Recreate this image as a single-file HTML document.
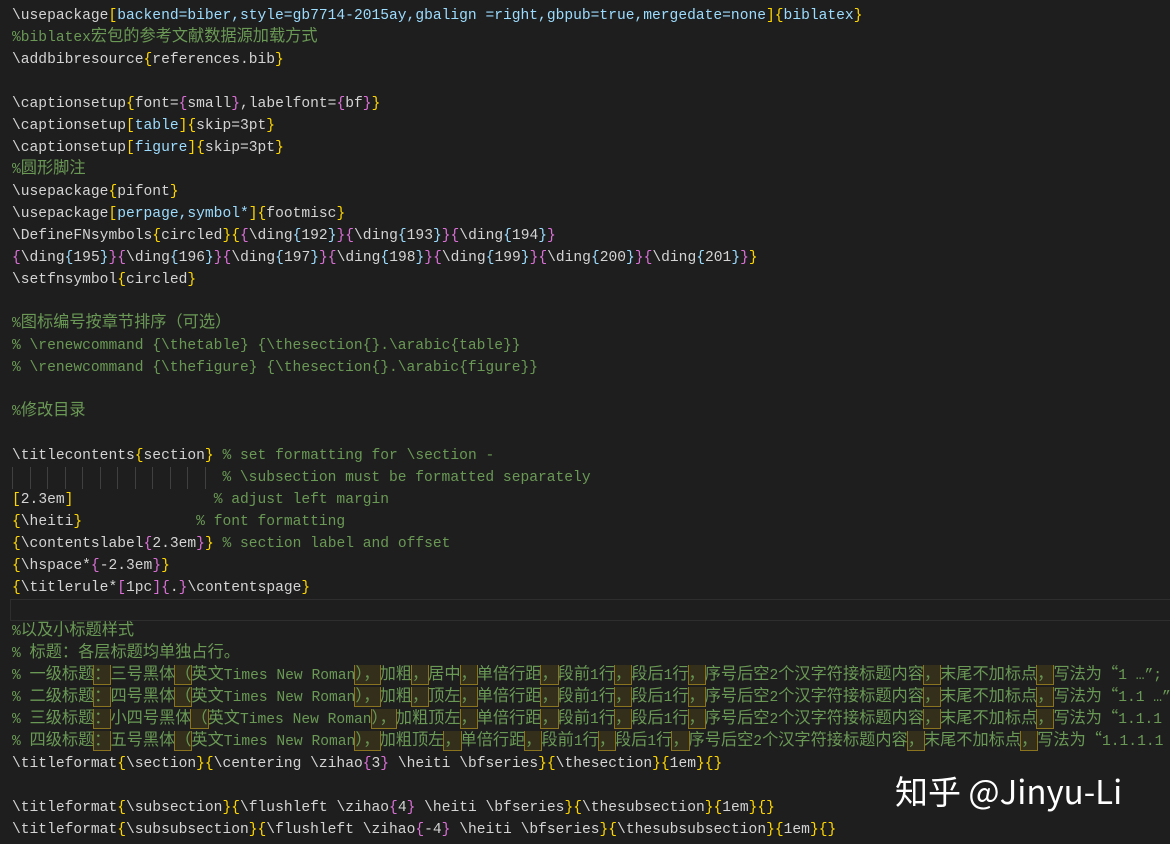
<!DOCTYPE html>
<html><head><meta charset="utf-8"><style>
html,body{margin:0;padding:0;background:#1e1e1e;width:1170px;height:844px;overflow:hidden}
#ed{position:absolute;left:12px;top:5px;font-family:"Liberation Mono",monospace;font-size:14.62px;color:#d4d4d4}
.l{height:22px;line-height:22px;white-space:pre;overflow:hidden}
.g{color:#ffd700}.m{color:#da70d6}.b{color:#9cdcfe}.c{color:#6a9955}
.k{font-family:"Noto Sans CJK SC",sans-serif;font-size:16.2px;line-height:0;vertical-align:baseline}
.x{outline:1px solid #8a7420;background:rgba(120,100,20,.25)}
.cur{position:absolute;left:10px;top:599px;width:1160px;height:20px;border:1px solid #2e2e2e}
.ig{display:inline-block;width:17.54px;height:22px;vertical-align:top;background:linear-gradient(to right,#404040 1px,transparent 1px)}
#wm{position:absolute;left:895px;top:768px;color:#fff;font-family:"Noto Sans CJK SC","Liberation Sans",sans-serif;font-size:33px;line-height:44px}
</style></head><body>
<div class="cur"></div>
<div id="ed"><div class="l">\usepackage<span class="g">[</span><span class="b">backend=biber,style=gb7714-2015ay,gbalign =right,gbpub=true,mergedate=none</span><span class="g">]{</span><span class="b">biblatex</span><span class="g">}</span></div><div class="l c">%biblatex<span class="k">宏包的参考文献数据源加载方式</span></div><div class="l">\addbibresource<span class="g">{</span>references.bib<span class="g">}</span></div><div class="l"> </div><div class="l">\captionsetup<span class="g">{</span>font=<span class="m">{</span>small<span class="m">}</span>,labelfont=<span class="m">{</span>bf<span class="m">}</span><span class="g">}</span></div><div class="l">\captionsetup<span class="g">[</span><span class="b">table</span><span class="g">]{</span>skip=3pt<span class="g">}</span></div><div class="l">\captionsetup<span class="g">[</span><span class="b">figure</span><span class="g">]{</span>skip=3pt<span class="g">}</span></div><div class="l c">%<span class="k">圆形脚注</span></div><div class="l">\usepackage<span class="g">{</span>pifont<span class="g">}</span></div><div class="l">\usepackage<span class="g">[</span><span class="b">perpage,symbol*</span><span class="g">]{</span>footmisc<span class="g">}</span></div><div class="l">\DefineFNsymbols<span class="g">{</span>circled<span class="g">}{</span><span class="m">{</span>\ding<span class="b">{</span>192<span class="b">}</span><span class="m">}{</span>\ding<span class="b">{</span>193<span class="b">}</span><span class="m">}{</span>\ding<span class="b">{</span>194<span class="b">}</span><span class="m">}</span></div><div class="l"><span class="m">{</span>\ding<span class="b">{</span>195<span class="b">}</span><span class="m">}{</span>\ding<span class="b">{</span>196<span class="b">}</span><span class="m">}{</span>\ding<span class="b">{</span>197<span class="b">}</span><span class="m">}{</span>\ding<span class="b">{</span>198<span class="b">}</span><span class="m">}{</span>\ding<span class="b">{</span>199<span class="b">}</span><span class="m">}{</span>\ding<span class="b">{</span>200<span class="b">}</span><span class="m">}{</span>\ding<span class="b">{</span>201<span class="b">}</span><span class="m">}</span><span class="g">}</span></div><div class="l">\setfnsymbol<span class="g">{</span>circled<span class="g">}</span></div><div class="l"> </div><div class="l c">%<span class="k">图标编号按章节排序（可选）</span></div><div class="l c">% \renewcommand {\thetable} {\thesection{}.\arabic{table}}</div><div class="l c">% \renewcommand {\thefigure} {\thesection{}.\arabic{figure}}</div><div class="l"> </div><div class="l c">%<span class="k">修改目录</span></div><div class="l"> </div><div class="l">\titlecontents<span class="g">{</span>section<span class="g">}</span> <span class="c">% set formatting for \section -</span></div><div class="l"><span class="ig"></span><span class="ig"></span><span class="ig"></span><span class="ig"></span><span class="ig"></span><span class="ig"></span><span class="ig"></span><span class="ig"></span><span class="ig"></span><span class="ig"></span><span class="ig"></span><span class="ig"></span><span class="c">% \subsection must be formatted separately</span></div><div class="l"><span class="g">[</span>2.3em<span class="g">]</span>                <span class="c">% adjust left margin</span></div><div class="l"><span class="g">{</span>\heiti<span class="g">}</span>             <span class="c">% font formatting</span></div><div class="l"><span class="g">{</span>\contentslabel<span class="m">{</span>2.3em<span class="m">}</span><span class="g">}</span> <span class="c">% section label and offset</span></div><div class="l"><span class="g">{</span>\hspace*<span class="m">{</span>-2.3em<span class="m">}</span><span class="g">}</span></div><div class="l"><span class="g">{</span>\titlerule*<span class="m">[</span>1pc<span class="m">]{</span>.<span class="m">}</span>\contentspage<span class="g">}</span></div><div class="l"> </div><div class="l c">%<span class="k">以及小标题样式</span></div><div class="l c">% <span class="k">标题：各层标题均单独占行。</span></div><div class="l c">% <span class="k">一级标题<span class="x">：</span>三号黑体<span class="x">（</span>英文</span>Times New Roman<span class="k"><span class="x">），</span>加粗<span class="x">，</span>居中<span class="x">，</span>单倍行距<span class="x">，</span>段前</span>1<span class="k">行<span class="x">，</span>段后</span>1<span class="k">行<span class="x">，</span>序号后空</span>2<span class="k">个汉字符接标题内容<span class="x">，</span>末尾不加标点<span class="x">，</span>写法为“</span>1 …”;</div><div class="l c">% <span class="k">二级标题<span class="x">：</span>四号黑体<span class="x">（</span>英文</span>Times New Roman<span class="k"><span class="x">），</span>加粗<span class="x">，</span>顶左<span class="x">，</span>单倍行距<span class="x">，</span>段前</span>1<span class="k">行<span class="x">，</span>段后</span>1<span class="k">行<span class="x">，</span>序号后空</span>2<span class="k">个汉字符接标题内容<span class="x">，</span>末尾不加标点<span class="x">，</span>写法为“</span>1.1 …”;</div><div class="l c">% <span class="k">三级标题<span class="x">：</span>小四号黑体<span class="x">（</span>英文</span>Times New Roman<span class="k"><span class="x">），</span>加粗顶左<span class="x">，</span>单倍行距<span class="x">，</span>段前</span>1<span class="k">行<span class="x">，</span>段后</span>1<span class="k">行<span class="x">，</span>序号后空</span>2<span class="k">个汉字符接标题内容<span class="x">，</span>末尾不加标点<span class="x">，</span>写法为“</span>1.1.1</div><div class="l c">% <span class="k">四级标题<span class="x">：</span>五号黑体<span class="x">（</span>英文</span>Times New Roman<span class="k"><span class="x">），</span>加粗顶左<span class="x">，</span>单倍行距<span class="x">，</span>段前</span>1<span class="k">行<span class="x">，</span>段后</span>1<span class="k">行<span class="x">，</span>序号后空</span>2<span class="k">个汉字符接标题内容<span class="x">，</span>末尾不加标点<span class="x">，</span>写法为“</span>1.1.1.1</div><div class="l">\titleformat<span class="g">{</span>\section<span class="g">}{</span>\centering \zihao<span class="m">{</span>3<span class="m">}</span> \heiti \bfseries<span class="g">}{</span>\thesection<span class="g">}{</span>1em<span class="g">}{}</span></div><div class="l"> </div><div class="l">\titleformat<span class="g">{</span>\subsection<span class="g">}{</span>\flushleft \zihao<span class="m">{</span>4<span class="m">}</span> \heiti \bfseries<span class="g">}{</span>\thesubsection<span class="g">}{</span>1em<span class="g">}{}</span></div><div class="l">\titleformat<span class="g">{</span>\subsubsection<span class="g">}{</span>\flushleft \zihao<span class="m">{</span>-4<span class="m">}</span> \heiti \bfseries<span class="g">}{</span>\thesubsubsection<span class="g">}{</span>1em<span class="g">}{}</span></div></div>
<div id="wm">知乎 @Jinyu-Li</div>
</body></html>
